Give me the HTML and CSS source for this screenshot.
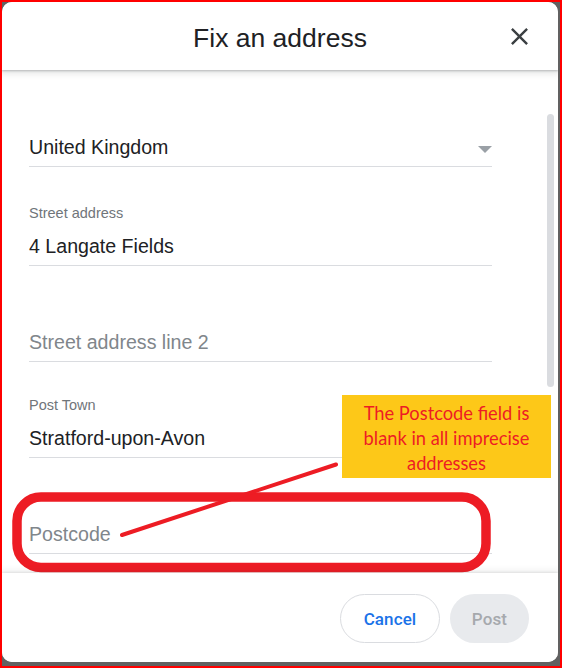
FILE: index.html
```html
<!DOCTYPE html>
<html lang="en">
<head>
<meta charset="utf-8">
<title>Fix an address</title>
<link rel="stylesheet" href="styles.css">
</head>
<body>
<div class="page">
  <div class="frame">
    <div class="modal">
      <header class="head">
        <span class="spacer"></span>
        <h1 class="title">Fix an address</h1>
        <button class="close" aria-label="Close">
          <svg viewBox="0 0 24 24" width="29" height="29"><path d="M19 6.41L17.59 5 12 10.59 6.41 5 5 6.41 10.59 12 5 17.59 6.41 19 12 13.41 17.59 19 19 17.59 13.41 12z" fill="#3c4043"/></svg>
        </button>
      </header>
      <div class="body">
        <div class="fields">
          <div class="field select first">
            <span class="value">United Kingdom</span>
            <span class="caret"></span>
          </div>
          <div class="field">
            <div class="stack">
              <span class="label">Street address</span>
              <span class="value">4 Langate Fields</span>
            </div>
          </div>
          <div class="field">
            <span class="value placeholder">Street address line 2</span>
          </div>
          <div class="field">
            <div class="stack">
              <span class="label">Post Town</span>
              <span class="value">Stratford-upon-Avon</span>
            </div>
          </div>
          <div class="field">
            <span class="value placeholder">Postcode</span>
          </div>
        </div>
        <div class="track"><div class="thumb"></div></div>
      </div>
      <footer class="foot">
        <button class="btn cancel">Cancel</button>
        <button class="btn post">Post</button>
      </footer>
    </div>
  </div>
  <svg class="annot" width="562" height="668" viewBox="0 0 562 668">
    <rect x="17" y="497" width="469" height="70.5" rx="24" ry="24" fill="none" stroke="#ed1c24" stroke-width="9.5"/>
    <line x1="336" y1="464.5" x2="122" y2="535" stroke="#ed1c24" stroke-width="4" stroke-linecap="round"/>
  </svg>
  <div class="note">The Postcode field is blank in all imprecise addresses</div>
</div>
</body>
</html>
```
FILE: styles.css
```css
* { box-sizing: border-box; }

html, body {
  margin: 0;
  padding: 0;
  background: #ffffff;
}

body {
  font-family: "Liberation Sans", Arial, sans-serif;
  color: #202124;
}

.page {
  position: relative;
  width: 562px;
  height: 668px;
}

.frame {
  width: 562px;
  height: 668px;
  border: 2px solid #ff0000;
  background: #616161;
}

.modal {
  width: 556px;
  height: 660px;
  background: #ffffff;
  border-radius: 10px;
  overflow: hidden;
  display: flex;
  flex-direction: column;
}

.head {
  position: relative;
  z-index: 1;
  height: 68px;
  flex: none;
  display: grid;
  grid-template-columns: 1fr auto 1fr;
  align-items: center;
  background: #ffffff;
  box-shadow: 0 1px 2px rgba(60, 64, 67, 0.3), 0 2px 6px 2px rgba(60, 64, 67, 0.12);
}

.title {
  margin: 0;
  font-size: 26.5px;
  font-weight: 400;
  line-height: 32px;
  color: #202124;
  padding-top: 4px;
}

.close {
  justify-self: end;
  margin-right: 24px;
  padding: 0;
  border: 0;
  background: none;
  width: 29px;
  height: 29px;
  display: flex;
}

.body {
  flex: 1;
  min-height: 0;
  overflow: hidden;
  display: flex;
}

.fields {
  margin-left: 27px;
  width: 463px;
  flex: none;
}

.field {
  height: 96px;
  border-bottom: 1px solid #dadce0;
  display: flex;
  align-items: flex-end;
  padding-bottom: 7px;
}

.field.first {
  height: 97px;
  margin-bottom: 3px;
}

.stack {
  display: flex;
  flex-direction: column;
}

.label {
  font-size: 14.5px;
  line-height: 16px;
  color: #70757a;
  margin-bottom: 13px;
}

.value {
  font-size: 19.6px;
  line-height: 24px;
  color: #202124;
}

.placeholder {
  color: #80868b;
}

.caret {
  margin-left: auto;
  margin-bottom: 6px;
  width: 0;
  height: 0;
  border-left: 7.5px solid transparent;
  border-right: 7.5px solid transparent;
  border-top: 7px solid #9aa0a6;
}

.track {
  margin-left: 55px;
  width: 7px;
  flex: none;
}

.thumb {
  margin-top: 44px;
  height: 273px;
  width: 7px;
  border-radius: 4px;
  background: #dadce0;
}

.foot {
  position: relative;
  z-index: 1;
  height: 89px;
  flex: none;
  display: flex;
  justify-content: flex-end;
  align-items: flex-start;
  gap: 10px;
  padding: 21px 29px 0 0;
  background: #ffffff;
  box-shadow: 0 -1px 2px rgba(60, 64, 67, 0.1), 0 -2px 6px 1px rgba(60, 64, 67, 0.08);
}

.btn {
  height: 49px;
  border-radius: 25px;
  font-family: Roboto, "Liberation Sans", Arial, sans-serif;
  font-size: 17px;
  font-weight: 500;
  letter-spacing: 0.1px;
  cursor: pointer;
}

.cancel {
  padding: 0 22.5px;
  background: #ffffff;
  border: 1px solid #dadce0;
  color: #1a73e8;
}

.post {
  padding: 0 22px;
  border: 0;
  background: #e8eaed;
  color: #a6a9ad;
}

.annot {
  position: absolute;
  left: 0;
  top: 0;
  pointer-events: none;
}

.note {
  position: absolute;
  left: 342px;
  top: 395px;
  width: 209px;
  height: 83px;
  padding: 6px 4px 0;
  background: #fdc818;
  color: #ed1c24;
  font-family: Lato, "Open Sans", sans-serif;
  font-size: 18.3px;
  line-height: 25px;
  text-align: center;
}
```
